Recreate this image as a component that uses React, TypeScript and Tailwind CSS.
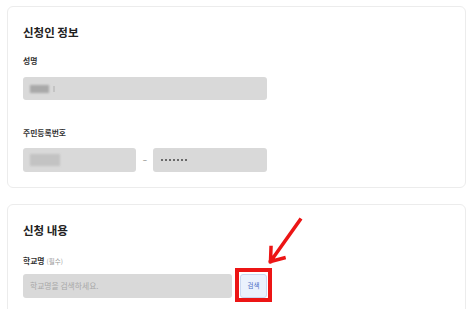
import React from "react";

const font = { fontFamily: '"Noto Sans CJK KR", "Noto Sans", sans-serif' };

export default function App() {
  return (
    <div
      className="relative w-[474px] h-[309px] overflow-hidden bg-white pt-[6px] pl-[7px] pr-[8px]"
      style={font}
    >
      {/* Card 1 */}
      <div className="rounded-[6px] border border-[#ececec] bg-white pl-[15px] pt-[17px] pb-[15px]">
        <div className="h-[16px] text-[11.5px] leading-[16px] font-bold text-[#222]">신청인 정보</div>
        <div className="mt-[16px] h-[10px] text-[7.8px] leading-[10px] font-bold text-[#333]">성명</div>
        <div className="mt-[11px] flex h-[23px] w-[244px] items-center rounded-[3px] bg-[#d9d9d9] pl-[7px]">
          <div className="h-[8px] w-[19px] bg-[#a9a9a9] blur-[0.8px]" />
          <div className="ml-[4px] h-[6px] w-[2px] bg-[#c4c4c4] blur-[0.5px]" />
        </div>
        <div className="mt-[28px] h-[10px] text-[7.8px] leading-[10px] font-bold text-[#333]">주민등록번호</div>
        <div className="mt-[10px] flex h-[24px] items-center">
          <div className="flex h-[24px] w-[113px] items-center rounded-[3px] bg-[#d9d9d9] pl-[7px]">
            <div className="h-[12px] w-[30px] bg-[#c3c3c3] blur-[1px]" />
          </div>
          <div className="w-[17px] pl-[1px] text-center text-[8px] leading-[10px] text-[#666]">–</div>
          <div className="flex h-[24px] w-[114px] items-center gap-[2px] rounded-[3px] bg-[#d9d9d9] pl-[8px]">
            {[0, 1, 2, 3, 4, 5, 6].map((i) => (
              <div key={i} className="h-[2px] w-[2px] rounded-full bg-[#444]" />
            ))}
          </div>
        </div>
      </div>

      {/* Card 2 */}
      <div className="mt-[16px] rounded-[6px] border border-[#ececec] bg-white pl-[15px] pt-[17px] pb-[20px]">
        <div className="h-[16px] text-[11.5px] leading-[16px] font-bold text-[#222]">신청 내용</div>
        <div className="mt-[18px] flex h-[10px] items-baseline gap-[2px] leading-[10px]">
          <span className="text-[7.8px] font-bold text-[#333]">학교명</span>
          <span className="text-[6.5px] text-[#999]">(필수)</span>
        </div>
        <div className="mt-[8px] flex h-[24px] items-center">
          <div className="flex h-[24px] w-[209px] items-center rounded-[3px] bg-[#d9d9d9] pl-[7px] text-[7.8px] text-[#a8a8a8]">
            학교명을 검색하세요.
          </div>
          <div className="relative ml-[8px]">
            <div className="flex h-[24px] w-[27px] items-center justify-center rounded-[3px] border border-[#c9d8f2] bg-[#eaf1fd] text-[6.5px] text-[#4a6fc4]">
              검색
            </div>
            <div className="absolute left-[-5px] top-[-6px] h-[34px] w-[37px] border-[4px] border-[#ec1515]" />
          </div>
        </div>
      </div>

      {/* Arrow */}
      <svg className="absolute left-0 top-0" width="474" height="309" viewBox="0 0 474 309">
        <path
          d="M300 220 L270.5 261.5 M270.5 261.5 L271 247.5 M270.5 261.5 L284 258"
          stroke="#ec1515"
          strokeWidth="3.5"
          strokeLinecap="square"
          fill="none"
        />
      </svg>
    </div>
  );
}
